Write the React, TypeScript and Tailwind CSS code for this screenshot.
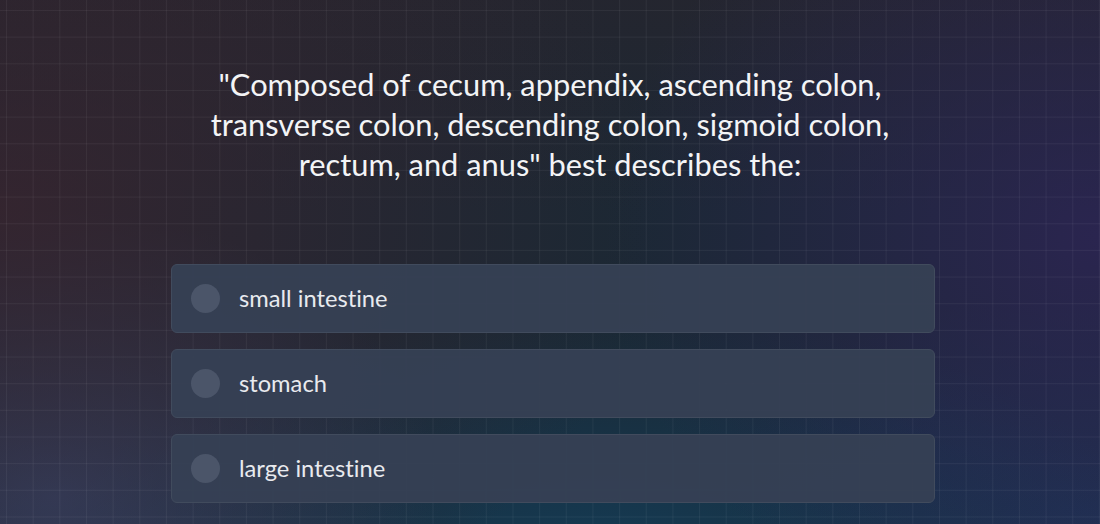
import React, { useState } from 'react';

const options = ['small intestine', 'stomach', 'large intestine'];

const App: React.FC = () => {
  const [selected, setSelected] = useState<number | null>(null);

  return (
    <div
      className="relative w-full h-[524px] overflow-hidden bg-[#1b2834] font-['Lato','Liberation_Sans',sans-serif] [font-variant-ligatures:none]"
    >
      {/* coloured glows */}
      <div className="pointer-events-none absolute inset-0 bg-[radial-gradient(ellipse_60%_90%_at_0%_40%,rgba(58,36,46,0.8),transparent),radial-gradient(ellipse_45%_80%_at_100%_45%,rgba(46,36,86,0.8),transparent),radial-gradient(ellipse_35%_55%_at_5%_95%,rgba(56,74,115,0.75),transparent),radial-gradient(ellipse_50%_45%_at_55%_105%,rgba(18,66,96,0.7),transparent),radial-gradient(ellipse_35%_45%_at_100%_100%,rgba(30,56,100,0.6),transparent),linear-gradient(180deg,rgba(42,36,44,0.6),transparent_40%)]" />
      {/* grid */}
      <div className="pointer-events-none absolute inset-0 bg-[linear-gradient(to_right,rgba(255,255,255,0.05)_1px,transparent_1px),linear-gradient(to_bottom,rgba(255,255,255,0.05)_1px,transparent_1px)] bg-[length:26.67px_26.67px] bg-[position:6px_10px]" />

      <div className="relative flex flex-col items-center pt-[65px]">
        <h1 className="w-[740px] text-center text-[30.8px] leading-[40px] text-[#f3f4f6]">
          "Composed of cecum, appendix, ascending colon, transverse colon, descending colon, sigmoid colon, rectum, and anus" best describes the:
        </h1>

        <div className="mt-[79px] flex w-[764px] translate-x-[3px] flex-col gap-4">
          {options.map((opt, i) => (
            <button
              key={opt}
              type="button"
              onClick={() => setSelected(i)}
              className="flex h-[69px] items-center gap-[19px] rounded-md border border-[#414b5d] bg-[#364054]/95 px-[19px] text-left"
            >
              <span
                className={`h-[29px] w-[29px] shrink-0 rounded-full ${selected === i ? 'bg-[#60a5fa]' : 'bg-[#4b5569]'}`}
              />
              <span className="text-[23.7px] text-[#e8eaee]">{opt}</span>
            </button>
          ))}
        </div>
      </div>
    </div>
  );
};

export default App;
